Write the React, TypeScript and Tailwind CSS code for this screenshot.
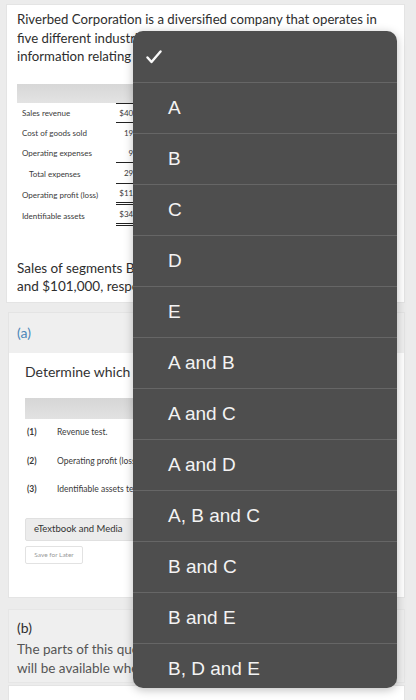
const pickerItems = [
    "A", "B", "C", "D", "E",
    "A and B", "A and C", "A and D", "A, B and C",
    "B and C", "B and E", "B, D and E",
];

const segmentRows = [
    { label: "Sales revenue", values: ["$40,000", "$180,000", "$320,000", "$95,000", "$22,000"], indent: false, line: "single", topLine: true, h: "h-[20px]" },
    { label: "Cost of goods sold", values: ["19,600", "84,000", "149,000", "51,000", "14,000"], indent: false, line: "none", topLine: false, h: "h-[20px]" },
    { label: "Operating expenses", values: ["9,400", "41,000", "70,000", "31,000", "9,000"], indent: false, line: "single", topLine: false, h: "h-[20px]" },
    { label: "Total expenses", values: ["29,000", "125,000", "219,000", "82,000", "23,000"], indent: true, line: "single", topLine: false, h: "h-[21px]" },
    { label: "Operating profit (loss)", values: ["$11,000", "$55,000", "$101,000", "$13,000", "$(1,000)"], indent: false, line: "double", topLine: false, h: "h-[21px]" },
    { label: "Identifiable assets", values: ["$34,000", "$102,000", "$236,000", "$65,000", "$27,000"], indent: false, line: "double", topLine: false, h: "h-[21px]" },
];

function SegmentTable() {
    return (
        <div className="w-[346px] text-[8px] text-[#3a3a3a]">
            <div className="flex h-[19px] bg-gradient-to-b from-[#d7d7d7] to-[#e3e3e3]">
                <div className="w-[99px]" />
                {["A", "B", "C", "D", "E"].map((s) => (
                    <div key={s} className="w-[46px] text-right pr-[14px] leading-[19px] font-bold">{s}</div>
                ))}
            </div>
            {segmentRows.map((r) => (
                <div key={r.label} className={`flex ${r.h} items-center`}>
                    <div className={`w-[99px] pt-[1px] ${r.indent ? "pl-[12px]" : "pl-[5px]"}`}>{r.label}</div>
                    {r.values.map((v, i) => (
                        <div key={i} className={`w-[46px] h-full flex items-center justify-end pt-[1px] pr-[13px] ${r.topLine ? "border-t border-t-[#222]" : ""} ${r.line === "single" ? "border-b border-b-[#222]" : ""} ${r.line === "double" ? "border-b-[3px] border-double border-b-[#222]" : ""}`}>
                            {v}
                        </div>
                    ))}
                </div>
            ))}
        </div>
    );
}

function Picker() {
    return (
        <div className="absolute left-[133px] top-[31px] w-[264px] h-[657px] rounded-[10px] bg-[#4e4e4e] overflow-hidden shadow-[0_2px_10px_rgba(0,0,0,0.25)] font-['Liberation_Sans',Arial,sans-serif] text-[19px] text-[#f3f3f3]">
            <div className="h-[51px] flex items-center pl-[13px]">
                <svg width="16" height="14" viewBox="0 0 16 14" fill="none">
                    <polyline points="1.5,7.5 5.5,12 14.5,1.5" stroke="#fafafa" strokeWidth="2.4" strokeLinecap="round" strokeLinejoin="round" />
                </svg>
            </div>
            {pickerItems.map((item) => (
                <div key={item} className="h-[51px] shrink-0 flex items-center pl-[35px] border-t border-[#666666]">
                    {item}
                </div>
            ))}
        </div>
    );
}

export default function App() {
    return (
        <div className="relative w-[416px] h-[700px] overflow-hidden bg-[#ececec] font-['Lato','Noto_Sans',sans-serif]">
            <div className="pl-[6px] pr-[11px] pt-[4px]">
                {/* problem statement */}
                <div className="bg-white border border-[#e4e4e4] pl-[10px] pt-[5px] pb-[7px] overflow-hidden">
                    <div className="w-[376px] overflow-hidden text-[13.2px] leading-[18.5px] text-[#2e2e2e] whitespace-nowrap">
                        <div>Riverbed Corporation is a diversified company that operates in</div>
                        <div>five different industries: A, B, C, D, and E. The following</div>
                        <div>information relating to each segment is available for 2025.</div>
                    </div>
                    <div className="mt-[18px]">
                        <SegmentTable />
                    </div>
                    <div className="mt-[33px] w-[370px] overflow-hidden text-[13.5px] leading-[18px] text-[#2e2e2e] whitespace-nowrap">
                        <div>Sales of segments B and C included intersegment sales of</div>
                        <div>and $101,000, respectively.</div>
                    </div>
                </div>

                {/* part (a) */}
                <div className="mt-[9px] ml-[2px] bg-white border border-[#e4e4e4] overflow-hidden">
                    <div className="h-[40px] bg-[#efefef] pl-[8px] flex items-center text-[14px] text-[#4b86b8]">(a)</div>
                    <div className="pl-[16px] pb-[33px]">
                        <div className="mt-[10px] w-[360px] overflow-hidden text-[14px] leading-[18px] text-[#333] whitespace-nowrap">
                            Determine which of the segments are reportable based on the:
                        </div>
                        <div className="mt-[17px] h-[21px] w-[360px] bg-gradient-to-b from-[#d6d6d6] to-[#e2e2e2]" />
                        <div className="text-[8.5px] text-[#3a3a3a] whitespace-nowrap">
                            <div className="flex h-[28px] items-center">
                                <span className="w-[32px] pl-[2px] font-bold">(1)</span>
                                <span>Revenue test.</span>
                            </div>
                            <div className="flex h-[29px] items-center">
                                <span className="w-[32px] pl-[2px] font-bold">(2)</span>
                                <span>Operating profit (loss) test.</span>
                            </div>
                            <div className="flex h-[28px] items-center">
                                <span className="w-[32px] pl-[2px] font-bold">(3)</span>
                                <span>Identifiable assets test.</span>
                            </div>
                        </div>
                        <div className="mt-[14px] h-[23px] w-[150px] bg-[#ececec] border border-[#e0e0e0] rounded-[2px] pl-[8px] flex items-center text-[9.5px] text-[#333]">
                            eTextbook and Media
                        </div>
                        <div className="mt-[5px] h-[18px] w-[58px] bg-white border border-[#e2e2e2] rounded-[2px] flex items-center justify-center text-[6.5px] text-[#999]">
                            Save for Later
                        </div>
                    </div>
                </div>

                {/* part (b) */}
                <div className="mt-[11px] ml-[2px] bg-[#efefef] border border-[#e6e6e6] pl-[8px] pt-[8px] pb-[3px] whitespace-nowrap overflow-hidden">
                    <div className="text-[14px] leading-[19px] text-[#2e2e2e]">(b)</div>
                    <div className="mt-[3px] text-[13.5px] leading-[19.5px] text-[#555]">
                        <div>The parts of this question must be completed in order. This</div>
                        <div>will be available when you complete the part above.</div>
                    </div>
                </div>
                <div className="mt-[2px] ml-[2px] h-[40px] bg-white border border-[#e4e4e4]" />
            </div>

            <Picker />
        </div>
    );
}
